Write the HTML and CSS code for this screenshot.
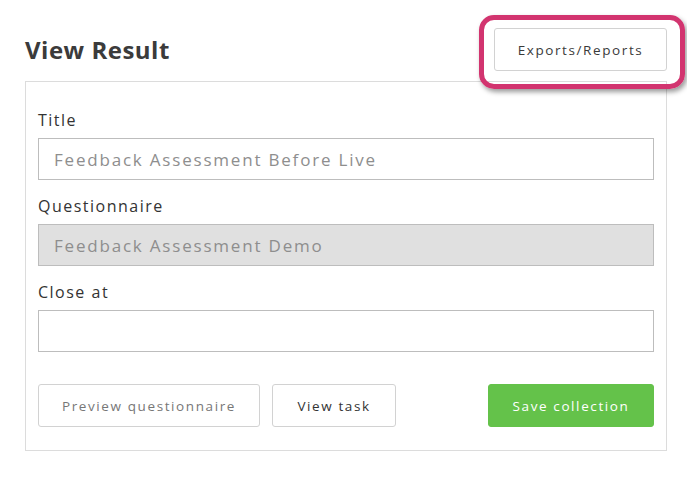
FILE: index.html
```html
<!DOCTYPE html>
<html>
<head>
<meta charset="utf-8">
<link rel="stylesheet" href="styles.css">
</head>
<body>
<div class="page">
  <div class="header">
    <h1 class="title">View Result</h1>
    <div class="highlight">
      <button class="btn btn-export">Exports/Reports</button>
    </div>
  </div>
  <div class="card">
    <div class="field">
      <label class="label">Title</label>
      <div class="input"><span class="placeholder">Feedback Assessment Before Live</span></div>
    </div>
    <div class="field">
      <label class="label">Questionnaire</label>
      <div class="input input-disabled"><span class="placeholder">Feedback Assessment Demo</span></div>
    </div>
    <div class="field">
      <label class="label">Close at</label>
      <div class="input"></div>
    </div>
    <div class="actions">
      <button class="btn btn-light">Preview questionnaire</button>
      <button class="btn btn-dark">View task</button>
      <button class="btn btn-save">Save collection</button>
    </div>
  </div>
</div>
</body>
</html>
```
FILE: styles.css
```css
* { box-sizing: border-box; }
body {
  margin: 0;
  background: #fff;
  font-family: "Open Sans", "Noto Sans", sans-serif;
  color: #333;
}
.page {
  width: 667px;
  padding: 28px 0 0 25px;
}
.header {
  display: flex;
  justify-content: space-between;
  align-items: center;
  margin-bottom: 10px;
}
.title {
  margin: 0;
  font-size: 24px;
  font-weight: 700;
  color: #3b3b3b;
  letter-spacing: 0.5px;
}
.highlight {
  position: relative;
}
.highlight::after {
  content: "";
  position: absolute;
  left: -15px;
  right: -18px;
  top: -13px;
  bottom: -18px;
  border: 5px solid #d2346f;
  border-radius: 15px;
  box-shadow: 2px 3px 5px rgba(0, 0, 0, 0.4);
  pointer-events: none;
}
.btn {
  font-family: "Open Sans", "Noto Sans", sans-serif;
  font-size: 13.5px;
  letter-spacing: 1.6px;
  height: 43px;
  border: 1px solid #d2d2d2;
  border-radius: 3px;
  background: #fff;
  color: #333;
  padding: 0;
  display: flex;
  align-items: center;
  justify-content: center;
}
.btn-export {
  width: 173px;
  color: #3a3a3a;
}
.card {
  border: 1px solid #dcdcdc;
  padding: 26px 12px 23px 12px;
}
.field {
  margin-bottom: 14px;
}
.label {
  display: block;
  font-size: 16px;
  line-height: 24px;
  letter-spacing: 1.5px;
  color: #333;
  margin-bottom: 6px;
}
.input {
  height: 42px;
  border: 1px solid #bdbdbd;
  background: #fff;
  display: flex;
  align-items: center;
  padding-left: 15px;
}
.input-disabled {
  background: #e0e0e0;
}
.placeholder {
  font-size: 17px;
  letter-spacing: 1.8px;
  color: #8e8e8e;
}
.actions {
  display: flex;
  gap: 12px;
  margin-top: 32px;
}
.btn-light {
  width: 222px;
  color: #777;
}
.btn-dark {
  width: 124px;
  color: #333;
}
.btn-save {
  width: 166px;
  margin-left: auto;
  background: #64c24a;
  border-color: #64c24a;
  color: #fff;
}
```
